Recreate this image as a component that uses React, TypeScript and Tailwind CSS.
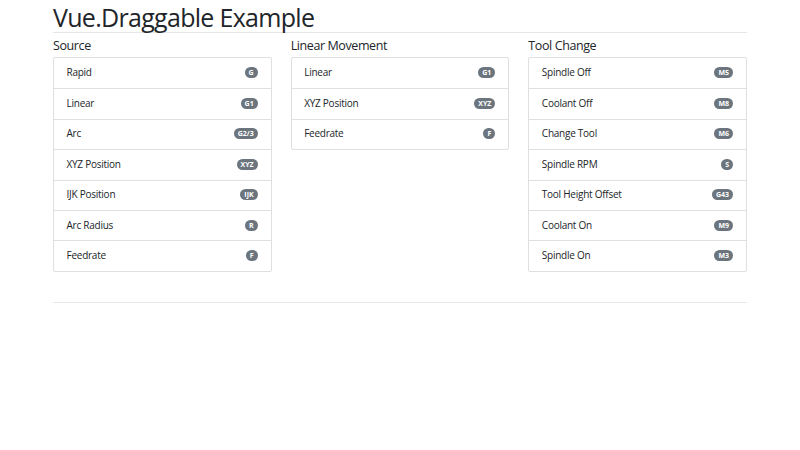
const columns: { title: string; items: [string, string][] }[] = [
  {
    title: "Source",
    items: [
      ["Rapid", "G"],
      ["Linear", "G1"],
      ["Arc", "G2/3"],
      ["XYZ Position", "XYZ"],
      ["IJK Position", "IJK"],
      ["Arc Radius", "R"],
      ["Feedrate", "F"],
    ],
  },
  {
    title: "Linear Movement",
    items: [
      ["Linear", "G1"],
      ["XYZ Position", "XYZ"],
      ["Feedrate", "F"],
    ],
  },
  {
    title: "Tool Change",
    items: [
      ["Spindle Off", "M5"],
      ["Coolant Off", "M8"],
      ["Change Tool", "M6"],
      ["Spindle RPM", "S"],
      ["Tool Height Offset", "G43"],
      ["Coolant On", "M9"],
      ["Spindle On", "M3"],
    ],
  },
];

export default function App() {
  return (
    <div
      className="w-[800px] h-[450px] bg-white text-[#212529] overflow-hidden"
      style={{ fontFamily: '"Open Sans", "Noto Sans", sans-serif' }}
    >
      <div className="mx-[53px]">
        <h1 className="text-[25px] leading-[34px] font-normal tracking-[-0.7px]">Vue.Draggable Example</h1>
        <hr className="-mt-[2px] border-t border-[#e6e6e6]" />
        <div className="grid grid-cols-3 gap-x-[19px] mt-[5px]">
          {columns.map((col) => (
            <div key={col.title}>
              <h5 className="text-[12.5px] leading-[15px] font-normal tracking-[-0.4px] mb-[4px]">{col.title}</h5>
              <ul className="border border-[#dfdfdf] rounded-[2px]">
                {col.items.map(([label, code], i) => (
                  <li
                    key={label}
                    className={`h-[30.4px] flex items-center justify-between pl-[12.5px] pr-[13px] text-[10px] tracking-[-0.25px] ${
                      i > 0 ? "border-t border-[#dfdfdf]" : ""
                    }`}
                  >
                    <span className="-mt-[1px]">{label}</span>
                    <span className="bg-[#6c757d] text-white text-[7px] font-bold leading-none tracking-normal rounded-full px-[4px] py-[2px] -mt-[1px]">
                      {code}
                    </span>
                  </li>
                ))}
              </ul>
            </div>
          ))}
        </div>
        <hr className="mt-[30px] border-t border-[#e6e6e6]" />
      </div>
    </div>
  );
}
